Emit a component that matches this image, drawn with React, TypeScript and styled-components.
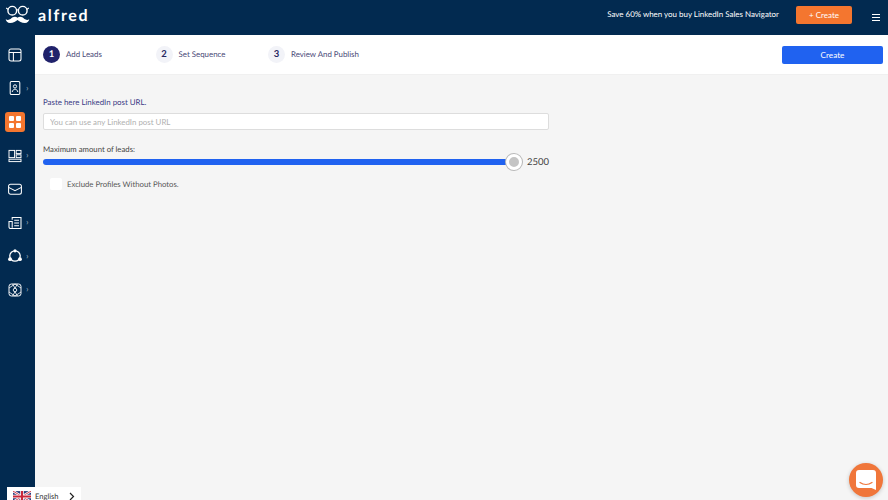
import React from "react";
import styled, { createGlobalStyle } from "styled-components";

const GlobalStyle = createGlobalStyle`
  html, body {
    margin: 0;
    padding: 0;
    height: 100%;
    overflow: hidden;
  }
  body {
    font-family: "Lato", "Open Sans", sans-serif;
    background: #f5f5f5;
    text-rendering: geometricPrecision;
  }
`;

const steps = [
  { id: 1, title: "Add Leads", active: true },
  { id: 2, title: "Set Sequence", active: false },
  { id: 3, title: "Review And Publish", active: false },
];

const navIcons = [
  {
    caret: false,
    draw: (
      <>
        <rect x="2.5" y="2.5" width="15" height="15" rx="2.5" fill="none" stroke="#fff" strokeWidth="1.3" />
        <path d="M2.5 7h15M8 7v10.5" fill="none" stroke="#fff" strokeWidth="1.3" />
      </>
    ),
  },
  {
    caret: true,
    draw: (
      <>
        <rect x="4" y="2" width="12" height="16" rx="1.5" fill="none" stroke="#fff" strokeWidth="1.3" />
        <circle cx="10" cy="8" r="2" fill="none" stroke="#fff" strokeWidth="1.2" />
        <path d="M6.5 15c.5-2.5 2-3.5 3.5-3.5s3 1 3.5 3.5" fill="none" stroke="#fff" strokeWidth="1.2" />
      </>
    ),
  },
  { caret: false, active: true, draw: null },
  {
    caret: true,
    draw: (
      <>
        <rect x="2.5" y="3" width="7" height="9" fill="none" stroke="#fff" strokeWidth="1.2" />
        <rect x="11.5" y="3" width="6" height="4" fill="none" stroke="#fff" strokeWidth="1.2" />
        <rect x="11.5" y="8.5" width="6" height="3.5" fill="none" stroke="#fff" strokeWidth="1.2" />
        <rect x="2.5" y="14" width="15" height="3" fill="none" stroke="#fff" strokeWidth="1.2" />
      </>
    ),
  },
  {
    caret: false,
    draw: (
      <>
        <rect x="2" y="4" width="16" height="12.5" rx="2.5" fill="none" stroke="#fff" strokeWidth="1.3" />
        <path d="M2 8l8 4 8-4" fill="none" stroke="#fff" strokeWidth="1.3" />
      </>
    ),
  },
  {
    caret: true,
    draw: (
      <>
        <path d="M6.5 6V3h11v14H4.500a2 2 0 0 1-2-2V8h4v8" fill="none" stroke="#fff" strokeWidth="1.3" />
        <path d="M9 6.500h6M9 10h6M9 13.500h6" fill="none" stroke="#fff" strokeWidth="1.3" />
      </>
    ),
  },
  {
    caret: true,
    draw: (
      <>
        <circle cx="10" cy="10" r="6.500" fill="none" stroke="#fff" strokeWidth="1.6" />
        <circle cx="10" cy="3.500" r="2" fill="#fff" />
        <circle cx="3.800" cy="14" r="2.400" fill="#fff" />
        <circle cx="16.200" cy="14" r="2.400" fill="#fff" />
      </>
    ),
  },
  {
    caret: true,
    draw: (
      <>
        <rect x="2.500" y="2.500" width="15" height="15" rx="3" fill="none" stroke="#fff" strokeWidth="1.200" />
        <circle cx="10" cy="10" r="2.200" fill="none" stroke="#fff" strokeWidth="1.100" />
        <path d="M2.500 7.500L10 2.500l7.500 5M2.500 12.500l7.500 5 7.500-5M7 2.500l3 5.300 3-5.300M7 17.500l3-5.300 3 5.300" fill="none" stroke="#fff" strokeWidth="1" />
      </>
    ),
  },
];

export default function App() {
  return (
    <>
      <GlobalStyle />
      <Page>
        <TopBar>
          <Brand>
            <svg width="27" height="23" viewBox="0 0 31 26">
              <circle cx="9.500" cy="7.500" r="5" fill="none" stroke="#fff" strokeWidth="1.600" />
              <circle cx="21.500" cy="7.500" r="5" fill="none" stroke="#fff" strokeWidth="1.600" />
              <path d="M14 7c1-.8 2-.8 3 0M5 6L2.500 4.500M26 6l2.500-1.500" fill="none" stroke="#fff" strokeWidth="1.300" />
              <path d="M15.500 15.500c-1.600-1.400-3.600-1.600-5.500-.4-1.700 1.200-3.200 3-5.500 3-1 0-1.900-.4-2.500-1 .1 2.600 2.100 4.600 5 4.600 3.800 0 6.600-2 8.500-3.600 1.900 1.600 4.700 3.600 8.500 3.600 2.900 0 4.900-2 5-4.600-.6.6-1.500 1-2.500 1-2.300 0-3.800-1.800-5.500-3-1.900-1.200-3.900-1-5.500.4z" fill="#fff" />
            </svg>
            <BrandName>alfred</BrandName>
          </Brand>
          <Promo>Save 60% when you buy LinkedIn Sales Navigator</Promo>
          <TopCreate>+ Create</TopCreate>
          <Burger>
            <span />
            <span />
            <span />
          </Burger>
        </TopBar>
        <Body>
          <Sidebar>
            {navIcons.map((item, i) => (
              <NavItem key={i}>
                {item.active ? (
                  <ActiveTile>
                    <span />
                    <span />
                    <span />
                    <span />
                  </ActiveTile>
                ) : (
                  <svg width="16" height="16" viewBox="0 0 20 20">
                    {item.draw}
                  </svg>
                )}
                {item.caret && <Caret>›</Caret>}
              </NavItem>
            ))}
          </Sidebar>
          <Main>
            <StepBar>
              <Steps>
                {steps.map((step) => (
                  <Step key={step.id}>
                    <StepNumber $active={step.active}>{step.id}</StepNumber>
                    <StepTitle>{step.title}</StepTitle>
                  </Step>
                ))}
              </Steps>
              <MainCreate>Create</MainCreate>
            </StepBar>
            <Form>
              <UrlLabel>Paste here LinkedIn post URL.</UrlLabel>
              <UrlInput placeholder="You can use any LinkedIn post URL" readOnly />
              <SliderLabel>Maximum amount of leads:</SliderLabel>
              <SliderRow>
                <Track>
                  <Thumb />
                </Track>
                <SliderValue>2500</SliderValue>
              </SliderRow>
              <CheckRow>
                <CheckBox />
                <CheckText>Exclude Profiles Without Photos.</CheckText>
              </CheckRow>
            </Form>
          </Main>
        </Body>
        <Language>
          <svg width="18" height="11" viewBox="0 0 60 36">
            <rect width="60" height="36" fill="#2b3a7a" />
            <path d="M0 0l60 36M60 0L0 36" stroke="#fff" strokeWidth="8" />
            <path d="M0 0l60 36M60 0L0 36" stroke="#c8283c" strokeWidth="3" />
            <path d="M30 0v36M0 18h60" stroke="#fff" strokeWidth="12" />
            <path d="M30 0v36M0 18h60" stroke="#c8283c" strokeWidth="7" />
          </svg>
          <LanguageName>English</LanguageName>
          <svg width="6" height="9" viewBox="0 0 6 9">
            <path d="M1 1l3.500 3.500L1 8" fill="none" stroke="#222" strokeWidth="1.200" />
          </svg>
        </Language>
        <Chat>
          <svg width="20" height="20" viewBox="0 0 20 20">
            <path d="M3 0h14a3 3 0 0 1 3 3v17l-4.500-2H3a3 3 0 0 1-3-3V3a3 3 0 0 1 3-3z" fill="#fff" />
            <path d="M4 12.500c3.500 2.400 8.500 2.400 12 0" fill="none" stroke="#f0763a" strokeWidth="1.300" strokeLinecap="round" />
          </svg>
        </Chat>
      </Page>
    </>
  );
}

const Page = styled.div`
  width: 888px;
  height: 500px;
  display: flex;
  flex-direction: column;
  position: relative;
  overflow: hidden;
  background: #f5f5f5;
`;

const TopBar = styled.header`
  height: 35px;
  flex: none;
  display: flex;
  align-items: center;
  background: #022a50;
  padding: 0 8px 0 4px;
`;

const Brand = styled.div`
  display: flex;
  align-items: center;
  gap: 7px;
  margin-right: auto;
  margin-top: -4px;
`;

const BrandName = styled.div`
  color: #fff;
  font-size: 16px;
  font-weight: 700;
  letter-spacing: 1.7px;
`;

const Promo = styled.div`
  color: #fff;
  font-size: 7.95px;
  margin-bottom: 7px;
`;

const TopCreate = styled.button`
  width: 56px;
  height: 18px;
  margin: 0 0 5px 17px;
  border: none;
  border-radius: 2px;
  background: #f4762f;
  color: #fff;
  font-family: inherit;
  font-size: 8px;
  padding: 0;
`;

const Burger = styled.div`
  width: 8px;
  margin-left: 20px;
  display: flex;
  flex-direction: column;
  gap: 1.5px;

  span {
    height: 1.5px;
    background: #fff;
  }
`;

const Body = styled.div`
  flex: 1;
  display: flex;
  min-height: 0;
`;

const Sidebar = styled.nav`
  width: 35px;
  flex: none;
  background: #022a50;
  display: flex;
  flex-direction: column;
  padding-top: 3px;
`;

const NavItem = styled.div`
  height: 33.6px;
  padding-right: 5px;
  display: flex;
  align-items: center;
  justify-content: center;
  position: relative;
`;

const Caret = styled.span`
  position: absolute;
  left: 26px;
  top: 11px;
  color: #8fa2b5;
  font-size: 9px;
  line-height: 10px;
`;

const ActiveTile = styled.div`
  width: 20px;
  height: 20px;
  box-sizing: border-box;
  padding: 4px;
  border-radius: 3px;
  background: #f4762f;
  display: grid;
  grid-template-columns: 1fr 1fr;
  gap: 2px;

  span {
    background: #fff;
    border-radius: 1px;
  }
`;

const Main = styled.main`
  flex: 1;
  min-width: 0;
  display: flex;
  flex-direction: column;
`;

const StepBar = styled.div`
  height: 39px;
  flex: none;
  display: flex;
  align-items: center;
  justify-content: space-between;
  background: #fff;
  padding: 0 5px 0 8px;
  box-shadow: 0 1px 1px rgba(0, 0, 0, 0.02);
`;

const Steps = styled.div`
  display: flex;
  align-items: center;
`;

const Step = styled.div`
  width: 112.5px;
  display: flex;
  align-items: center;
  gap: 6px;
  margin-top: -1px;
`;

const StepNumber = styled.div<{ $active: boolean }>`
  width: 17px;
  height: 17px;
  border-radius: 50%;
  display: flex;
  align-items: center;
  justify-content: center;
  font-size: 9.5px;
  font-weight: 700;
  color: ${(p) => (p.$active ? "#fff" : "#26265f")};
  background: ${(p) => (p.$active ? "#20226b" : "#f2f3f8")};
`;

const StepTitle = styled.div`
  font-size: 7.9px;
  color: #4a4a78;
`;

const MainCreate = styled.button`
  width: 101px;
  height: 18px;
  border: none;
  border-radius: 2px;
  background: #2062f0;
  color: #fff;
  font-family: inherit;
  font-size: 8.2px;
  padding: 0;
`;

const Form = styled.div`
  width: 506px;
  padding: 23px 0 0 8px;
`;

const UrlLabel = styled.div`
  font-size: 7.9px;
  line-height: 11px;
  color: #3c3c85;
`;

const UrlInput = styled.input`
  display: block;
  width: 100%;
  height: 17px;
  box-sizing: border-box;
  margin-top: 5px;
  padding: 0 6px;
  border: 1px solid #dddddd;
  border-radius: 2px;
  background: #fff;
  font-family: inherit;
  font-size: 7.9px;
  outline: none;

  &::placeholder {
    color: #b0b0b0;
  }
`;

const SliderLabel = styled.div`
  margin-top: 14px;
  font-size: 7.75px;
  line-height: 11px;
  color: #444;
`;

const SliderRow = styled.div`
  display: flex;
  align-items: center;
  height: 14px;
`;

const Track = styled.div`
  flex: 1;
  height: 6px;
  border-radius: 3px;
  background: #2062f0;
  position: relative;
`;

const Thumb = styled.div`
  position: absolute;
  right: -8px;
  top: -5px;
  width: 16px;
  height: 16px;
  box-sizing: border-box;
  border-radius: 50%;
  background: #c4c4c4;
  border: 3px solid #fff;
  box-shadow: 0 0 0 1px #b8b8b8;
`;

const SliderValue = styled.div`
  flex: none;
  width: 22px;
  margin-left: 13px;
  font-size: 9.5px;
  color: #444;
`;

const CheckRow = styled.div`
  display: flex;
  align-items: center;
  margin: 9px 0 0 7px;
  gap: 5px;
`;

const CheckBox = styled.div`
  width: 12px;
  height: 12px;
  border-radius: 2px;
  background: #fff;
`;

const CheckText = styled.div`
  font-size: 7.75px;
  color: #555;
`;

const Language = styled.div`
  position: absolute;
  left: 7px;
  bottom: 0;
  width: 74px;
  height: 13px;
  box-sizing: border-box;
  background: #fff;
  display: flex;
  align-items: center;
  padding: 5px 6px 0;
`;

const LanguageName = styled.span`
  font-size: 7.6px;
  color: #333;
  margin: 0 auto 0 4px;
`;

const Chat = styled.div`
  position: absolute;
  right: 5px;
  bottom: 3px;
  width: 34px;
  height: 34px;
  border-radius: 50%;
  background: #f0763a;
  display: flex;
  align-items: center;
  justify-content: center;
  box-shadow: 0 1px 4px rgba(0, 0, 0, 0.2);
`;
